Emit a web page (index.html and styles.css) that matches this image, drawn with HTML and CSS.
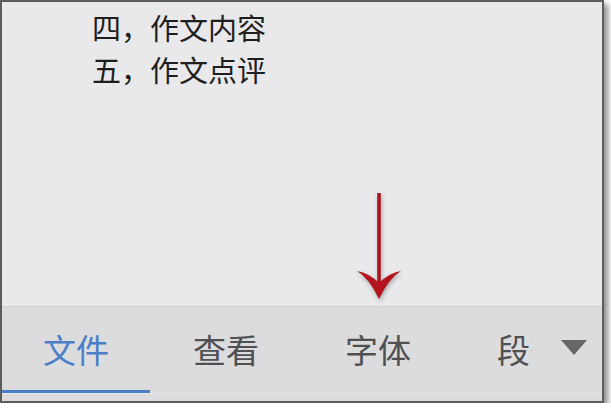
FILE: index.html
```html
<!DOCTYPE html>
<html lang="zh">
<head>
<meta charset="utf-8">
<link rel="stylesheet" href="styles.css">
</head>
<body>
<div class="frame">
  <div class="content">
    <div class="lines">
      <p class="line">四，作文内容</p>
      <p class="line">五，作文点评</p>
    </div>
    <svg class="arrow" width="60" height="120" viewBox="0 0 60 120">
      <line x1="30" y1="5" x2="30" y2="100" stroke="#a8121b" stroke-width="3.5"/>
      <path d="M8 83 Q20 90 30 111 Q40 90 52 83 Q40 85 30 95 Q20 85 8 83 Z" fill="#b3141d"/>
    </svg>
  </div>
  <div class="toolbar">
    <div class="tabs">
      <div class="tab active">文件</div>
      <div class="tab">查看</div>
      <div class="tab">字体</div>
      <div class="tab">段落</div>
    </div>
    <div class="more"><span class="tri"></span></div>
  </div>
</div>
</body>
</html>
```

FILE: styles.css
```css
html, body {
  margin: 0;
  padding: 0;
  background: #ffffff;
}
body {
  font-family: "Noto Sans CJK SC", "Noto Sans", sans-serif;
}
.frame {
  width: 600px;
  height: 399px;
  border: 2px solid #5c5c5e;
  box-shadow: 4px 4px 6px rgba(0, 0, 0, 0.45);
  display: flex;
  flex-direction: column;
  overflow: hidden;
  background: #e9e8ea;
}
.content {
  position: relative;
  flex: 1;
  overflow: hidden;
  background: #e9e8ea;
}
.lines {
  margin-top: 4px;
  padding-left: 90px;
}
.line {
  margin: 0;
  font-size: 29px;
  line-height: 42px;
  color: #1e1e1e;
}
.arrow {
  position: absolute;
  left: 347px;
  top: 186px;
  filter: drop-shadow(1px 2px 2px rgba(0, 0, 0, 0.3));
}
.toolbar {
  position: relative;
  height: 95px;
  flex: none;
  background: #dcdbdd;
  border-top: 1px solid #d0cfd2;
  box-sizing: border-box;
}
.tabs {
  display: grid;
  grid-template-columns: repeat(4, 152px);
  height: 86px;
  border-bottom: 1px solid #e7e6e8;
  margin-left: -4px;
}
.tab {
  display: flex;
  align-items: center;
  justify-content: center;
  font-size: 33px;
  color: #505052;
  padding-bottom: 2px;
  box-sizing: border-box;
}
.tab.active {
  color: #4a7ec8;
  border-bottom: 3px solid #4a7ec8;
  padding-bottom: 0;
  padding-left: 4px;
}
.more {
  position: absolute;
  right: 0;
  top: 0;
  width: 70px;
  height: 86px;
  background: #dcdbdd;
  display: flex;
  align-items: center;
  justify-content: flex-start;
  padding-left: 29px;
  box-sizing: border-box;
}
.tri {
  width: 0;
  height: 0;
  border-left: 13px solid transparent;
  border-right: 13px solid transparent;
  border-top: 15px solid #676769;
  margin-top: -6px;
}
```
